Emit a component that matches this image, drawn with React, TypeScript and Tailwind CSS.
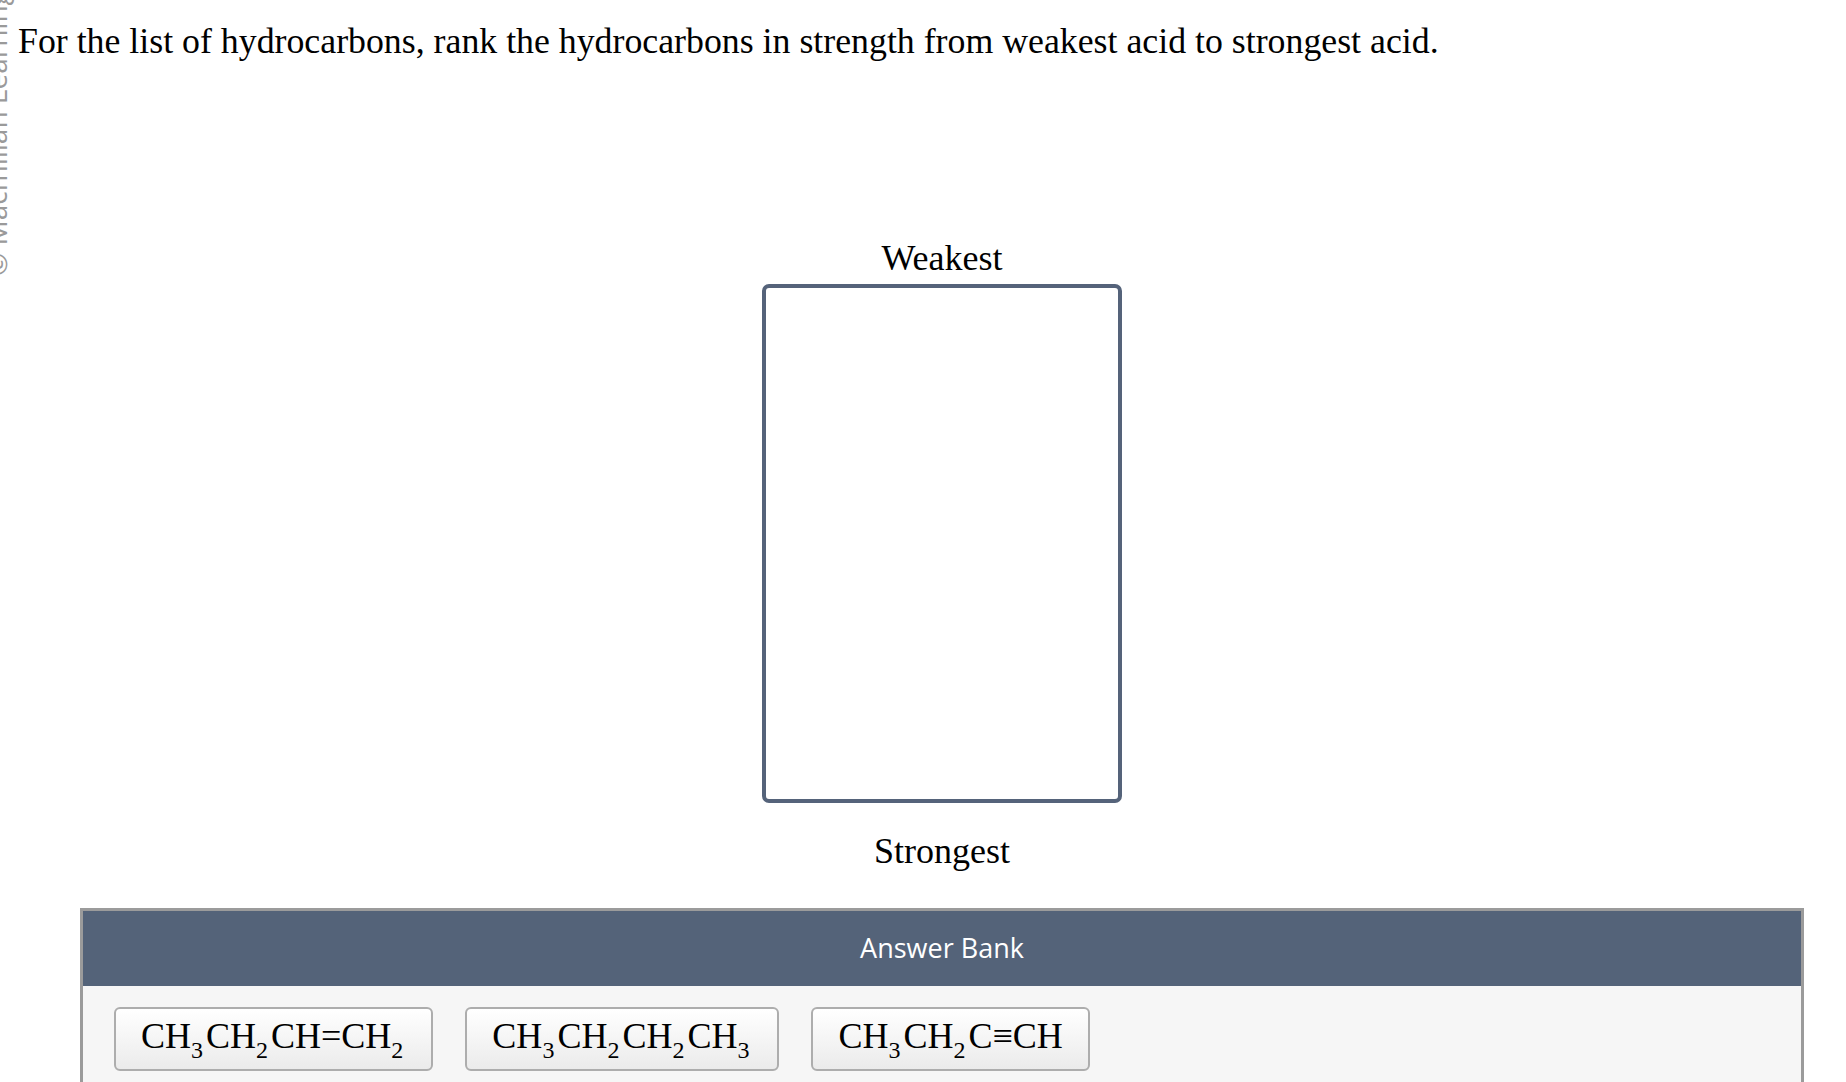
import React from "react";

type Part = { t: string; sub?: boolean };

const formulas: Part[][] = [
  [{ t: "CH" }, { t: "3", sub: true }, { t: "CH" }, { t: "2", sub: true }, { t: "CH=CH" }, { t: "2", sub: true }],
  [{ t: "CH" }, { t: "3", sub: true }, { t: "CH" }, { t: "2", sub: true }, { t: "CH" }, { t: "2", sub: true }, { t: "CH" }, { t: "3", sub: true }],
  [{ t: "CH" }, { t: "3", sub: true }, { t: "CH" }, { t: "2", sub: true }, { t: "C\u2261CH" }],
];

function Formula({ parts }: { parts: Part[] }) {
  return (
    <span className="whitespace-nowrap">
      {parts.map((p, i) =>
        p.sub ? (
          <span key={i} className="relative top-[10px] text-[24px] mr-[3px]">
            {p.t}
          </span>
        ) : (
          <span key={i}>{p.t}</span>
        )
      )}
    </span>
  );
}

export default function App() {
  return (
    <div className="relative min-h-screen bg-white overflow-hidden font-['Liberation_Serif','Times_New_Roman',serif] text-black">
      {/* watermark */}
      <div className="absolute left-[-18px] top-[276px] origin-top-left -rotate-90 whitespace-nowrap font-['Open_Sans',sans-serif] text-[28px] leading-none text-[#9a9a9a]">
        © Macmillan Learning
      </div>

      <p className="pl-[18px] pt-[20px] text-[35.8px] leading-[42px]">
        For the list of hydrocarbons, rank the hydrocarbons in strength from weakest acid to strongest acid.
      </p>

      <div className="ml-[80px] w-[1724px]">
        <div className="flex flex-col items-center pt-[176px]">
          <div className="text-[36px] leading-[40px]">Weakest</div>
          <div className="mt-[6px] h-[519px] w-[360px] rounded-[7px] border-4 border-[#55637a] bg-white" />
          <div className="mt-[28px] text-[36px] leading-[40px]">Strongest</div>
        </div>

        <div className="mt-[37px] border-[3px] border-b-0 border-[#9b9b9b]">
          <div className="flex h-[75px] items-center justify-center bg-[#546379] font-['Open_Sans',sans-serif] text-[27px] text-white">
            Answer Bank
          </div>
          <div className="flex gap-[32px] bg-[#f6f6f6] pl-[31px] pt-[21px] pb-[20px]">
            {formulas.map((f, i) => (
              <div
                key={i}
                className="flex h-[64px] items-center rounded-[6px] border-2 border-[#adadad] bg-gradient-to-b from-white to-[#ebebeb] px-[25px] pb-[6px] text-[36px] leading-none"
              >
                <Formula parts={f} />
              </div>
            ))}
          </div>
        </div>
      </div>
    </div>
  );
}
